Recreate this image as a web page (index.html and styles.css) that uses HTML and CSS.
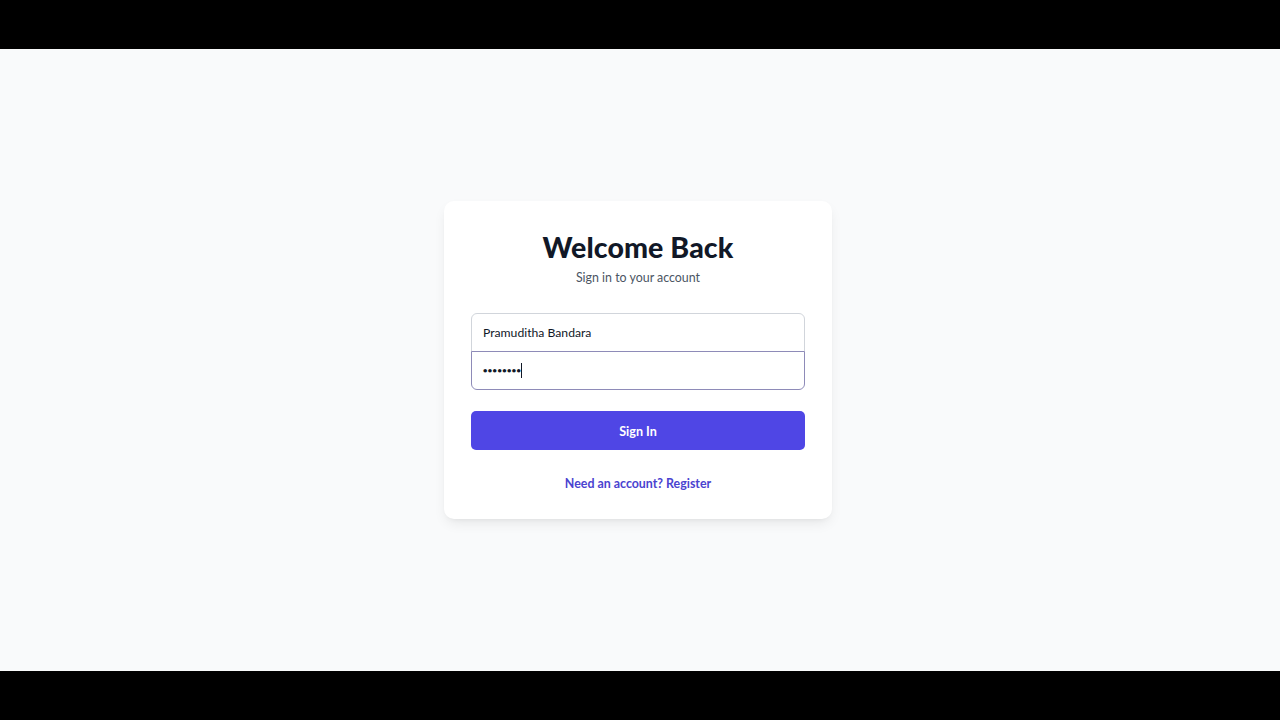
FILE: index.html
```html
<!DOCTYPE html>
<html lang="en">
<head>
<meta charset="utf-8">
<title>Sign In</title>
<link rel="stylesheet" href="styles.css">
</head>
<body>
<div class="bar"></div>
<main class="page">
  <section class="card">
    <h1 class="title">Welcome Back</h1>
    <p class="subtitle">Sign in to your account</p>
    <form class="form">
      <div class="fields">
        <div class="field field-top">Pramuditha Bandara</div>
        <div class="field field-bottom focused"><span class="dots">••••••••</span><span class="caret"></span></div>
      </div>
      <button type="button" class="btn">Sign In</button>
    </form>
    <a class="link" href="#">Need an account? Register</a>
  </section>
</main>
<div class="bar"></div>
</body>
</html>
```
FILE: styles.css
```css
* { box-sizing: border-box; }
html, body { margin: 0; padding: 0; }
body {
  width: 1280px;
  height: 720px;
  background: #000;
  display: flex;
  flex-direction: column;
  font-family: "Lato", "Open Sans", "Liberation Sans", sans-serif;
  overflow: hidden;
}
.bar { height: 49px; background: #000; flex: none; }
.page {
  height: 622px;
  flex: none;
  background: #f9fafb;
  display: flex;
  align-items: center;
  justify-content: center;
  padding-right: 4px;
}
.card {
  width: 388px;
  background: #fff;
  border-radius: 10px;
  padding: 28px 27px 26px 27px;
  box-shadow: 0 6px 14px -3px rgba(0,0,0,0.09), 0 3px 6px -4px rgba(0,0,0,0.08);
  display: flex;
  flex-direction: column;
  align-items: stretch;
  text-align: center;
}
.title {
  margin: 0;
  font-size: 28.5px;
  line-height: 36px;
  font-weight: 900;
  color: #111827;
  letter-spacing: 0.1px;
}
.subtitle {
  margin: 3px 0 0;
  font-size: 12.4px;
  line-height: 20px;
  color: #4b5563;
}
.form { margin-top: 25px; display: flex; flex-direction: column; }
.fields { display: flex; flex-direction: column; }
.field {
  height: 39px;
  border: 1px solid #d1d5db;
  padding: 0 11px;
  display: flex;
  align-items: center;
  font-size: 12.2px;
  color: #111827;
  text-align: left;
  background: #fff;
}
.field-top { border-radius: 6px 6px 0 0; }
.field-bottom { border-radius: 0 0 6px 6px; margin-top: -1px; }
.focused { border-color: #8e8bb8; }
.dots { font-size: 7.5px; letter-spacing: 0.45px; color: #111827; font-weight: 900; }
.caret {
  display: inline-block;
  width: 1px;
  height: 15px;
  background: #111827;
  margin-left: 0;
}
.btn {
  margin-top: 21px;
  height: 39px;
  border: none;
  border-radius: 5px;
  background: #4f46e5;
  color: #fff;
  font-family: inherit;
  font-size: 12.6px;
  font-weight: 700;
  cursor: pointer;
  padding-top: 3px;
}
.link {
  margin-top: 25px;
  line-height: 18px;
  font-size: 12.4px;
  font-weight: 700;
  color: #4a43d0;
  text-decoration: none;
}
```
